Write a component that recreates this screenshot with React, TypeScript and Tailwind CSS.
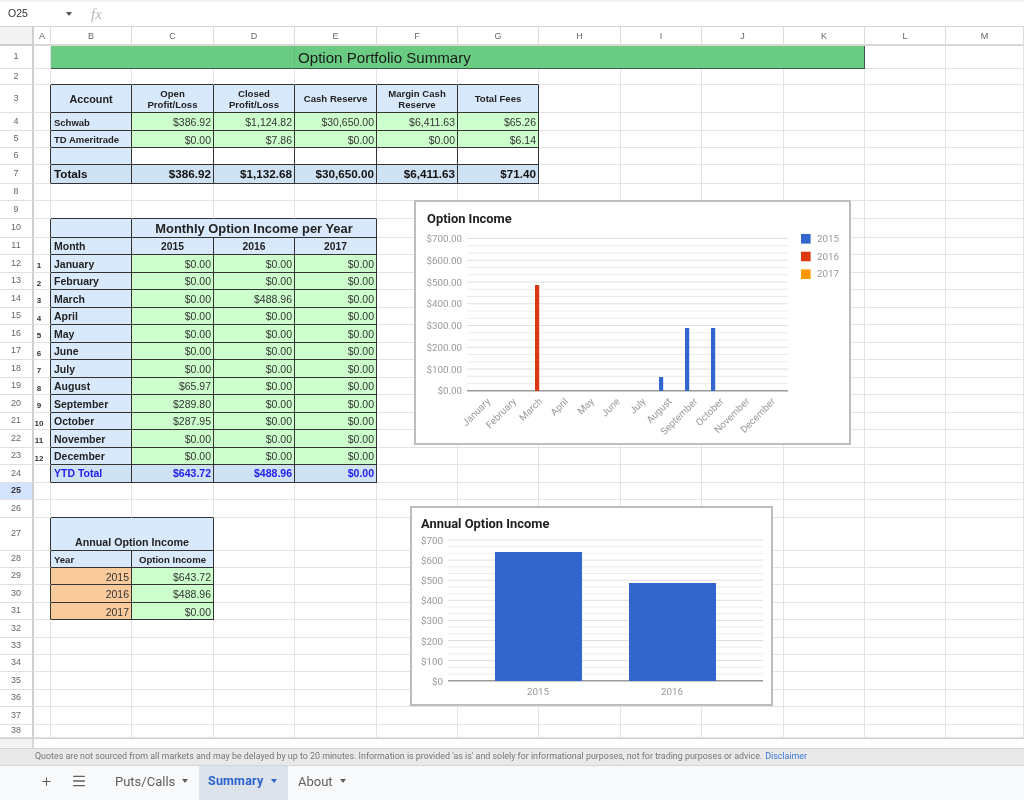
import { Menu, Plus } from 'lucide-react'

type Cell = { text?: string; className?: string; span?: number; dark?: boolean; edgeR?: string; edgeB?: string }

const cols = ['A', 'B', 'C', 'D', 'E', 'F', 'G', 'H', 'I', 'J', 'K', 'L', 'M']
const months = ['January', 'February', 'March', 'April', 'May', 'June', 'July', 'August', 'September', 'October', 'November', 'December']

const head = 'bg-[#d9e9fc] justify-center text-center font-bold text-[9.6px] leading-[11px] text-[#222] whitespace-pre-line'
const rowLabel = 'bg-[#d9e9fc] justify-start pl-[3px] pt-[3px] font-bold text-[9.5px] text-[#222]'
const monthLabel = 'bg-[#d9e9fc] justify-start pl-[3px] pt-[3px] font-bold text-[10.5px] text-[#222]'
const money = 'bg-[#ccffcc] justify-end pr-[2px] pt-[3px] text-[10.5px] text-[#333]'
const total = 'bg-[#cfe2f3] justify-end pr-[2px] font-bold text-[11.7px] text-[#111]'
const ytd = 'bg-[#cfe2f3] justify-end pr-[2px] pt-[2px] font-bold text-[10.5px] text-[#2222ee]'
const year = 'bg-[#f9cb9c] justify-end pr-[2px] pt-[3px] text-[10.5px] text-[#333]'

const cells: Record<string, Cell> = {}
function put(key: string, text: string, className: string, span = 1) {
  cells[key] = { text, className, span, dark: true }
}

cells.B1 = { className: 'bg-[#6acc82]', span: 3, edgeB: 'border-b-[#3d5c45]', edgeR: 'border-r-[#62bd79]' }
cells.E1 = { text: 'Option Portfolio Summary', className: 'bg-[#6acc82] justify-start pl-[3px] pt-[2px] text-[15.1px] text-[#1a1a1a] whitespace-nowrap', span: 7, edgeB: 'border-b-[#3d5c45]', edgeR: 'border-r-[#3d5c45]' }

put('B3', 'Account', 'bg-[#d9e9fc] justify-center pt-[2px] font-bold text-[10.8px] text-[#222]')
put('C3', 'Open\nProfit/Loss', head)
put('D3', 'Closed\nProfit/Loss', head)
put('E3', 'Cash Reserve', head)
put('F3', 'Margin Cash\nReserve', head)
put('G3', 'Total Fees', head)

const accounts = [
  ['Schwab', '$386.92', '$1,124.82', '$30,650.00', '$6,411.63', '$65.26'],
  ['TD Ameritrade', '$0.00', '$7.86', '$0.00', '$0.00', '$6.14'],
]
accounts.forEach((row, i) => {
  put('B' + (4 + i), row[0], rowLabel)
  row.slice(1).forEach((value, j) => put('CDEFG'[j] + (4 + i), value, money))
})
put('B6', '', 'bg-[#d9e9fc]')
'CDEFG'.split('').forEach((c) => put(c + '6', '', 'bg-white'))
put('B7', 'Totals', 'bg-[#cfe2f3] justify-start pl-[3px] font-bold text-[11.7px] text-[#111]')
;['$386.92', '$1,132.68', '$30,650.00', '$6,411.63', '$71.40'].forEach((value, j) => put('CDEFG'[j] + '7', value, total))

put('B10', '', 'bg-[#d9e9fc]')
put('C10', 'Monthly Option Income per Year', 'bg-[#d9e9fc] justify-center pt-[2px] font-bold text-[12.9px] text-[#222] whitespace-nowrap', 3)
put('B11', 'Month', 'bg-[#d9e9fc] justify-start pl-[3px] pt-[2px] font-bold text-[10.5px] text-[#222]')
;['2015', '2016', '2017'].forEach((value, j) => put('CDE'[j] + '11', value, 'bg-[#d9e9fc] justify-center pt-[2px] font-bold text-[10.3px] text-[#222]'))

const income: Record<string, string[]> = {
  March: ['$0.00', '$488.96', '$0.00'],
  August: ['$65.97', '$0.00', '$0.00'],
  September: ['$289.80', '$0.00', '$0.00'],
  October: ['$287.95', '$0.00', '$0.00'],
}
months.forEach((month, i) => {
  const row = 12 + i
  cells['A' + row] = { text: String(i + 1), className: 'justify-center pr-[6px] pt-[6px] font-bold text-[8px] text-[#333]' }
  put('B' + row, month, monthLabel)
  const values = income[month] ?? ['$0.00', '$0.00', '$0.00']
  values.forEach((value, j) => put('CDE'[j] + row, value, money))
})
put('B24', 'YTD Total', 'bg-[#cfe2f3] justify-start pl-[3px] pt-[2px] font-bold text-[10.5px] text-[#2222ee]')
;['$643.72', '$488.96', '$0.00'].forEach((value, j) => put('CDE'[j] + '24', value, ytd))

put('B27', 'Annual Option Income', 'bg-[#d9e9fc] justify-center items-end font-bold text-[10.7px] text-[#222]', 2)
put('B28', 'Year', 'bg-[#d9e9fc] justify-start pl-[3px] pt-[3px] font-bold text-[9.5px] text-[#222]')
put('C28', 'Option Income', 'bg-[#d9e9fc] justify-center pt-[3px] font-bold text-[9.6px] text-[#222]')
;[['2015', '$643.72'], ['2016', '$488.96'], ['2017', '$0.00']].forEach(([y, value], i) => {
  put('B' + (29 + i), y, year)
  put('C' + (29 + i), value, money)
})

// which cell covers a position, so merged cells count for their neighbours
function owner(c: number, r: number) {
  for (let i = c; i >= 0; i--) {
    const cell = cells[cols[i] + r]
    if (cell) return i + (cell.span ?? 1) > c ? cell : undefined
  }
  return undefined
}

function SheetCell({ col, row }: { col: number; row: number }) {
  const cell = cells[cols[col] + row]
  const span = cell?.span ?? 1
  let below = false
  for (let i = col; i < col + span; i++) if (owner(i, row + 1)?.dark) below = true
  const right = cell?.edgeR ?? (cell?.dark || owner(col + span, row)?.dark ? 'border-r-[#333]' : 'border-r-[#e3e3e3]')
  const bottom = cell?.edgeB ?? (cell?.dark || below ? 'border-b-[#333]' : 'border-b-[#e3e3e3]')
  return (
    <div className={`flex items-center overflow-visible border-r border-b ${right} ${bottom} ${cell?.className ?? ''}`} style={span > 1 ? { gridColumn: `span ${span}` } : undefined}>
      {cell?.text && <span>{cell.text}</span>}
    </div>
  )
}

function Caret({ className }: { className: string }) {
  return <span className={`inline-block h-0 w-0 border-x-[3.5px] border-t-[4px] border-x-transparent ${className}`} />
}

function OptionIncomeChart() {
  const ticks = [700, 600, 500, 400, 300, 200, 100, 0]
  const bars = [
    { x: 121, top: 85, color: '#dc3912' },
    { x: 245, top: 177, color: '#3366cc' },
    { x: 271, top: 128, color: '#3366cc' },
    { x: 297, top: 128, color: '#3366cc' },
  ]
  return (
    <svg width="433" height="241" className="block font-['Roboto']">
      <text x="11" y="21" fontSize="12.9" fontWeight="700" fill="#212121">Option Income</text>
      {ticks.map((tick, i) => (
        <g key={tick}>
          <line x1="51" x2="372" y1={36.5 + i * 21.76} y2={36.5 + i * 21.76} stroke={tick === 0 ? '#999' : '#dedede'} strokeWidth={tick === 0 ? 1.5 : 1} />
          {tick > 0 && <line x1="51" x2="372" y1={43.75 + i * 21.76} y2={43.75 + i * 21.76} stroke="#ececec" />}
          {tick > 0 && <line x1="51" x2="372" y1={51 + i * 21.76} y2={51 + i * 21.76} stroke="#ececec" />}
          <text x="46" y={40 + i * 21.76} textAnchor="end" fontSize="9.8" fill="#999">{'$' + tick + '.00'}</text>
        </g>
      ))}
      {bars.map((bar) => (
        <rect key={bar.x} x={bar.x - 2} y={bar.top - 2} width="4.2" height={191 - bar.top} fill={bar.color} />
      ))}
      {months.map((month, i) => {
        const x = 75 + i * 25.9
        return (
          <text key={month} x={x} y="200" textAnchor="end" fontSize="9.8" fill="#999" transform={`rotate(-45 ${x} 200)`}>{month}</text>
        )
      })}
      {[['2015', '#3366cc'], ['2016', '#dc3912'], ['2017', '#ff9900']].map(([label, color], i) => (
        <g key={label}>
          <rect x="385" y={32 + i * 17.7} width="9.6" height="9.6" fill={color} />
          <text x="401" y={40 + i * 17.7} fontSize="9.8" fill="#999">{label}</text>
        </g>
      ))}
    </svg>
  )
}

function AnnualChart() {
  const ticks = [700, 600, 500, 400, 300, 200, 100, 0]
  return (
    <svg width="359" height="196" className="block font-['Roboto']">
      <text x="9" y="20" fontSize="12.9" fontWeight="700" fill="#212121">Annual Option Income</text>
      {ticks.map((tick, i) => (
        <g key={tick}>
          <line x1="36" x2="351" y1={32 + i * 20.1} y2={32 + i * 20.1} stroke={tick === 0 ? '#999' : '#dedede'} strokeWidth={tick === 0 ? 1.5 : 1} />
          {tick > 0 && <line x1="36" x2="351" y1={38.7 + i * 20.1} y2={38.7 + i * 20.1} stroke="#ececec" />}
          {tick > 0 && <line x1="36" x2="351" y1={45.4 + i * 20.1} y2={45.4 + i * 20.1} stroke="#ececec" />}
          <text x="31" y={36 + i * 20.1} textAnchor="end" fontSize="9.8" fill="#999">{'$' + tick}</text>
        </g>
      ))}
      <rect x="83" y="44" width="87" height="129" fill="#3366cc" />
      <rect x="217" y="75" width="87" height="98" fill="#3366cc" />
      <text x="126" y="187" textAnchor="middle" fontSize="9.8" fill="#999">2015</text>
      <text x="260" y="187" textAnchor="middle" fontSize="9.8" fill="#999">2016</text>
    </svg>
  )
}

export default function App() {
  const rows = Array.from({ length: 38 }, (_, i) => i + 1)
  return (
    <div className="flex h-[800px] w-[1024px] flex-col overflow-hidden bg-white font-['Liberation_Sans',Arial,sans-serif] blur-[0.5px]">
      {/* formula bar */}
      <div className="flex h-[27px] items-center border-t-2 border-b border-t-[#f4f4f4] border-b-[#d4d4d4] text-[#333]">
        <span className="ml-[8px] w-[58px] text-[10.5px]">O25</span>
        <Caret className="border-t-[#555]" />
        <span className="ml-[19px] font-['Liberation_Serif',serif] text-[15px] text-[#b5b5b5] italic">fx</span>
      </div>

      {/* sheet */}
      <div className="relative">
        <div className="grid grid-cols-[34px_17px_81px_82px_81px_82px_81px_81px_82px_81px_82px_81px_81px_78px] grid-rows-[19px_23px_16px_28px_18px_17px_17px_19px_17px_18px_19px_17px_repeat(14,17.5px)_18px_33px_17px_repeat(9,17.4px)_13px]">
          <div className="border-r-2 border-b-2 border-[#d0d0d0] bg-[#f3f3f3]" />
          {cols.map((c) => (
            <div key={c} className="flex items-center justify-center border-r border-b-2 border-r-[#dcdcdc] border-b-[#d8d8d8] pt-[2px] text-[9px] text-[#666]">{c}</div>
          ))}
          {rows.map((row) => [
            <div key={'h' + row} className={`flex items-center justify-center border-r-2 border-b border-r-[#d0d0d0] border-b-[#dedede] text-[9px] ${row === 25 ? 'bg-[#d3e3fd] font-bold text-[#333]' : 'text-[#666]'}`}>{row}</div>,
            ...cols.map((_, col) => {
              const covered = owner(col, row) && !cells[cols[col] + row]
              return covered ? null : <SheetCell key={cols[col] + row} col={col} row={row} />
            }),
          ])}
        </div>

        {/* charts float over the cells */}
        <div className="absolute top-[173px] left-[414px] border-2 border-[#bdbdbd] bg-white">
          <OptionIncomeChart />
        </div>
        <div className="absolute top-[479px] left-[410px] border-2 border-[#bdbdbd] bg-white">
          <AnnualChart />
        </div>
      </div>

      <div className="flex h-[10px] border-t border-[#d0d0d0]">
        <div className="w-[34px] border-r-2 border-[#d8d8d8] bg-[#f3f3f3]" />
      </div>

      <div className="flex h-[18px] items-center whitespace-nowrap border-y border-[#d4d4d4] bg-[#e9e9e9] pl-[35px] font-['Roboto',sans-serif] text-[8.9px] text-[#777]">
        <span>Quotes are not sourced from all markets and may be delayed by up to 20 minutes. Information is provided 'as is' and solely for informational purposes, not for trading purposes or advice.</span>
        <span className="ml-[3px] text-[#3b78d8]">Disclaimer</span>
      </div>

      {/* sheet tabs */}
      <div className="flex flex-1 items-stretch bg-[#f8f9fa] font-['Roboto',sans-serif] text-[13px] font-normal text-[#5f5f5f]">
        <div className="flex w-[66px] items-center justify-end pb-[3px]">
          <Plus size={13} strokeWidth={2} className="mr-[13px]" />
        </div>
        <div className="flex w-[33px] items-center pb-[3px]"><Menu size={16} strokeWidth={2} className="ml-[5px]" /></div>
        <div className="flex w-[100px] items-center pb-[3px] pl-[16px]">
          <span className="w-[67px]">Puts/Calls</span>
          <Caret className="border-t-[#5f5f5f]" />
        </div>
        <div className="flex w-[89px] items-center bg-[#dde3ea] pb-[3px] pl-[9px] text-[12.5px] font-bold tracking-[0.2px] text-[#2a62cc]">
          <span className="w-[63px]">Summary</span>
          <Caret className="border-t-[#2a62cc]" />
        </div>
        <div className="flex items-center pb-[3px] pl-[10px]">
          <span className="w-[42px]">About</span>
          <Caret className="border-t-[#5f5f5f]" />
        </div>
      </div>
    </div>
  )
}
